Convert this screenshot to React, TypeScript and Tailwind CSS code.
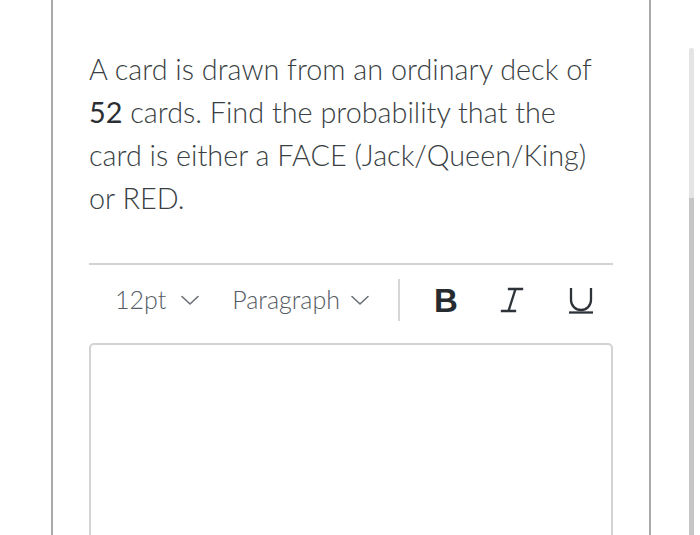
// Question card with a small rich-text toolbar and an empty answer box

function Chevron() {
  return (
    <svg width="18" height="10" viewBox="0 0 18 10" fill="none" stroke="#6b7177" strokeWidth="1.6" strokeLinecap="round" strokeLinejoin="round">
      <path d="M1 1.5l8 7.5 8-7.5" />
    </svg>
  );
}

function Dropdown({ label, gap }: { label: string; gap: string }) {
  return (
    <div className={`flex items-center ${gap} text-[25px] font-light text-[#555c63]`}>
      <span>{label}</span>
      <Chevron />
    </div>
  );
}

export default function App() {
  return (
    <div className="relative w-[700px] h-[535px] overflow-hidden bg-white font-['Lato','Liberation_Sans',sans-serif]">
      <div className="ml-[51px] w-[600px] h-full border-l-2 border-r-2 border-[#a9a9a9] pl-[36px] pt-[48px]">
        <p className="w-[524px] text-[28.8px] leading-[43px] font-light text-[#3a3f44] whitespace-nowrap">
          A card is drawn from an ordinary deck of
          <br />
          <span className="font-normal text-[#2b2f33]">52</span> cards. Find the probability that the
          <br />
          card is either a FACE (Jack/Queen/King)
          <br />
          or RED.
        </p>

        <div className="w-[524px] mt-[43px] border-t-2 border-[#d3d3d3]">
          <div className="flex items-center h-[70px] pl-[26px]">
            <Dropdown label="12pt" gap="gap-[15px]" />
            <div className="ml-[33px]">
              <Dropdown label="Paragraph" gap="gap-[11px]" />
            </div>
            <div className="ml-[29px] w-[2px] h-[42px] bg-[#d6d6d6]" />
            <span className="ml-[34px] text-[33px] font-bold text-[#262b30] leading-none font-['Liberation_Sans',sans-serif]">
              B
            </span>
            <svg className="ml-[42px]" width="24" height="26" viewBox="0 0 24 26" fill="none" stroke="#2d3338" strokeWidth="2.3" strokeLinecap="square">
              <path d="M9 2h13M2 24h13M15.5 2L8.5 24" />
            </svg>
            <svg className="ml-[43px]" width="28" height="27" viewBox="0 0 28 27" fill="none" stroke="#2d3338" strokeWidth="2.3">
              <path d="M4 1v12a10 10 0 0 0 20 0V1" />
              <path d="M2 25.5h24" />
            </svg>
          </div>
        </div>

        <div className="w-[524px] mt-[8px] h-[260px] border-2 border-[#d3d3d3] rounded-[5px]" />
      </div>

      <div className="absolute left-[689px] top-[48px] w-[5px] h-[500px] rounded-full bg-[#e4e4e4]">
        <div className="mt-[150px] h-[360px] w-full bg-[#c6c6c6]" />
      </div>
    </div>
  );
}
